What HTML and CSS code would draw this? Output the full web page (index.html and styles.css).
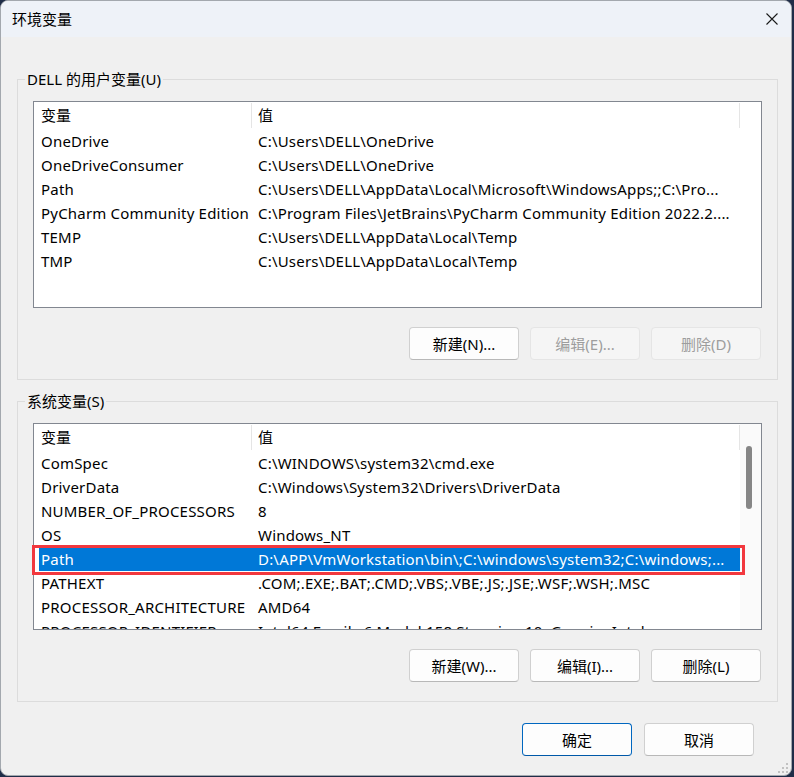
FILE: index.html
```html
<!DOCTYPE html>
<html lang="zh-CN">
<head>
  <meta charset="UTF-8">
  <title>环境变量</title>
  <link rel="stylesheet" href="styles.css">
</head>
<body>

  <div class="window">
    <div class="titlebar">
      <span class="title">环境变量</span>
      <svg class="close" width="12" height="12" viewBox="0 0 12 12">
        <path d="M0.5 0.5 L11.5 11.5 M11.5 0.5 L0.5 11.5" stroke="#1a1a1a" stroke-width="1.1" fill="none"/>
      </svg>
    </div>

    <div class="content">
      <fieldset class="group">
        <legend>DELL 的用户变量(U)</legend>
        <div class="list">
          <div class="list-main">
            <div class="list-head">
              <span class="head-cell">变量</span>
              <span class="head-cell">值</span>
            </div>
            <div class="list-body">
              <div class="row"><span class="name">OneDrive</span><span class="value">C:\Users\DELL\OneDrive</span></div>
              <div class="row"><span class="name">OneDriveConsumer</span><span class="value">C:\Users\DELL\OneDrive</span></div>
              <div class="row"><span class="name">Path</span><span class="value">C:\Users\DELL\AppData\Local\Microsoft\WindowsApps;;C:\Pro...</span></div>
              <div class="row"><span class="name">PyCharm Community Edition</span><span class="value">C:\Program Files\JetBrains\PyCharm Community Edition 2022.2....</span></div>
              <div class="row"><span class="name">TEMP</span><span class="value">C:\Users\DELL\AppData\Local\Temp</span></div>
              <div class="row"><span class="name">TMP</span><span class="value">C:\Users\DELL\AppData\Local\Temp</span></div>
            </div>
          </div>
          <div class="list-side"></div>
        </div>
        <div class="buttons">
          <button>新建(N)...</button>
          <button disabled>编辑(E)...</button>
          <button disabled>删除(D)</button>
        </div>
      </fieldset>

      <fieldset class="group group-system">
        <legend>系统变量(S)</legend>
        <div class="list">
          <div class="list-main">
            <div class="list-head">
              <span class="head-cell">变量</span>
              <span class="head-cell">值</span>
            </div>
            <div class="list-body">
              <div class="row"><span class="name">ComSpec</span><span class="value">C:\WINDOWS\system32\cmd.exe</span></div>
              <div class="row"><span class="name">DriverData</span><span class="value">C:\Windows\System32\Drivers\DriverData</span></div>
              <div class="row"><span class="name">NUMBER_OF_PROCESSORS</span><span class="value">8</span></div>
              <div class="row"><span class="name">OS</span><span class="value">Windows_NT</span></div>
              <div class="row selected"><span class="name">Path</span><span class="value">D:\APP\VmWorkstation\bin\;C:\windows\system32;C:\windows;...</span></div>
              <div class="row"><span class="name">PATHEXT</span><span class="value">.COM;.EXE;.BAT;.CMD;.VBS;.VBE;.JS;.JSE;.WSF;.WSH;.MSC</span></div>
              <div class="row"><span class="name">PROCESSOR_ARCHITECTURE</span><span class="value">AMD64</span></div>
              <div class="row"><span class="name">PROCESSOR_IDENTIFIER</span><span class="value">Intel64 Family 6 Model 158 Stepping 10, GenuineIntel</span></div>
            </div>
          </div>
          <div class="list-side scrollbar"><div class="thumb"></div></div>
          <div class="mark"></div>
        </div>
        <div class="buttons">
          <button>新建(W)...</button>
          <button>编辑(I)...</button>
          <button>删除(L)</button>
        </div>
      </fieldset>

      <div class="dialog-buttons">
        <button class="default">确定</button>
        <button>取消</button>
      </div>
    </div>

    <svg class="grip" width="10" height="10" viewBox="0 0 10 10">
      <rect x="8" y="0" width="2" height="2"/>
      <rect x="4" y="4" width="2" height="2"/>
      <rect x="8" y="4" width="2" height="2"/>
      <rect x="0" y="8" width="2" height="2"/>
      <rect x="4" y="8" width="2" height="2"/>
      <rect x="8" y="8" width="2" height="2"/>
    </svg>
  </div>

</body>
</html>
```

FILE: styles.css
```css
* {
  box-sizing: border-box;
}

body {
  margin: 0;
  background-color: #1f2d48;
  font-family: "Noto Sans", "Noto Sans CJK SC", sans-serif;
  font-size: 15px;
  color: #000;
}

.window {
  position: relative;
  width: 792px;
  height: 776px;
  background-color: #f0f0f0;
  border: 1px solid #a3a8ae;
  border-radius: 8px;
  overflow: hidden;
  display: flex;
  flex-direction: column;
}

.titlebar {
  height: 36px;
  flex: 0 0 auto;
  background-color: #eef2f8;
  display: flex;
  align-items: center;
  justify-content: space-between;
  padding: 0 13px 0 11px;
}

.title {
  line-height: 20px;
}

.close {
  display: block;
}

.content {
  padding: 0 13px 0 16px;
}

/* group boxes */
.group {
  margin: 32px 0 0 0;
  padding: 0 15px 19px 15px;
  border: 1px solid #dcdcdc;
  min-width: 0;
}

.group-system {
  margin-top: 11px;
}

.group legend {
  margin-left: -8px;
  padding: 0 2px;
  line-height: 20px;
}

/* list views */
.list {
  position: relative;
  margin-top: 12px;
  height: 207px;
  background-color: #fff;
  border: 1px solid #828790;
  display: flex;
}

.list-main {
  width: 706px;
  flex: 0 0 auto;
  display: flex;
  flex-direction: column;
}

.list-side {
  flex: 1;
}

.list-head {
  height: 27px;
  flex: 0 0 auto;
  display: grid;
  grid-template-columns: 218px 488px;
}

.head-cell {
  margin-top: 1px;
  height: 25px;
  line-height: 25px;
  padding-left: 7px;
  border-right: 1px solid #e5e5e5;
}

.head-cell + .head-cell {
  padding-left: 6px;
}

.list-body {
  flex: 1;
  overflow: hidden;
}

.row {
  height: 24px;
  line-height: 24px;
  margin-left: 5px;
  display: grid;
  grid-template-columns: 213px 488px;
  white-space: nowrap;
  letter-spacing: 0.2px;
}

.row .name {
  padding-left: 2px;
  overflow: hidden;
}

.row .value {
  padding-left: 6px;
  overflow: hidden;
}

.row.selected {
  background-color: #0078d7;
  color: #fff;
}

.scrollbar {
  background-color: #fafafa;
  position: relative;
}

.thumb {
  margin: 22px 0 0 6px;
  width: 6px;
  height: 63px;
  border-radius: 3px;
  background-color: #868686;
}

/* red box around the selected Path entry */
.mark {
  position: absolute;
  left: -2px;
  top: 121px;
  width: 713px;
  height: 30px;
  border: 3px solid #f2383e;
}

/* buttons */
.buttons {
  margin: 19px 1px 0 0;
  display: flex;
  justify-content: flex-end;
  gap: 11px;
}

button {
  width: 110px;
  height: 33px;
  font-family: inherit;
  font-size: 15px;
  color: #000;
  background-color: #fdfdfd;
  border: 1px solid #d0d0d0;
  border-bottom-color: #b8b8b8;
  border-radius: 4px;
  padding: 0;
}

button:disabled {
  color: #9d9d9d;
  background-color: #f5f5f5;
  border-color: #e5e5e5;
}

.dialog-buttons {
  margin: 21px 24px 0 0;
  display: flex;
  justify-content: flex-end;
  gap: 12px;
}

button.default {
  border-color: #0067c0;
  border-bottom-color: #0058a8;
}

.grip {
  position: absolute;
  right: 3px;
  bottom: 2px;
  fill: #c2c2c2;
}
```
